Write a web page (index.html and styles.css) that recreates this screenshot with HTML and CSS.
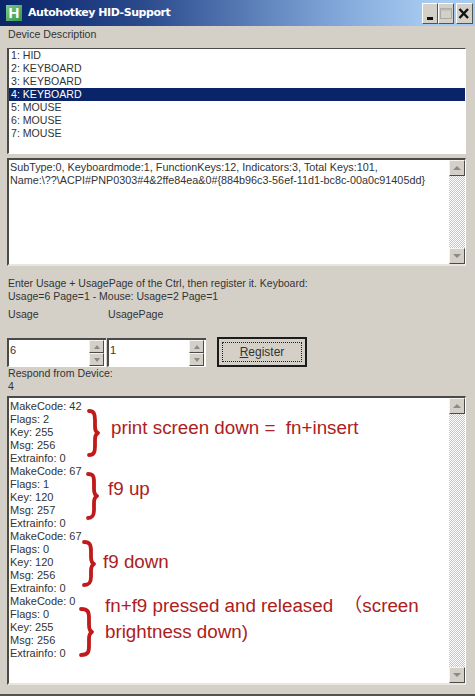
FILE: index.html
```html
<!DOCTYPE html>
<html lang="en">
<head>
<meta charset="utf-8">
<title>Autohotkey HID-Support</title>
<link rel="stylesheet" href="styles.css">
</head>
<body>
<div class="window">
  <header class="titlebar">
    <span class="app-icon">H</span>
    <span class="title">Autohotkey HID-Support</span>
    <div class="controls">
      <span class="ctl ctl-min"><svg width="16" height="20" viewBox="0 0 16 20"><rect x="5" y="14" width="6" height="3" fill="#111"/></svg></span>
      <span class="ctl ctl-max"><svg width="16" height="20" viewBox="0 0 16 20"><rect x="2.5" y="5.5" width="11" height="10" fill="none" stroke="#a8a8a4"/><rect x="2.5" y="5.5" width="11" height="2" fill="#b8b8b4"/></svg></span>
      <span class="ctl ctl-close"><svg width="16" height="20" viewBox="0 0 16 20"><path d="M3.500 6 12 15M12 6 3.500 15" stroke="#111" stroke-width="2.400" fill="none"/></svg></span>
    </div>
  </header>
  <main class="content">
    <div class="label first-label">Device Description</div>
    <ul class="listbox">
      <li>1: HID</li>
      <li>2: KEYBOARD</li>
      <li>3: KEYBOARD</li>
      <li class="selected">4: KEYBOARD</li>
      <li>5: MOUSE</li>
      <li>6: MOUSE</li>
      <li>7: MOUSE</li>
    </ul>
    <div class="textbox info">
      <div class="textbody">SubType:0, Keyboardmode:1, FunctionKeys:12, Indicators:3, Total Keys:101,<br>Name:\??\ACPI#PNP0303#4&amp;2ffe84ea&amp;0#{884b96c3-56ef-11d1-bc8c-00a0c91405dd}</div>
      <div class="scrollbar"><span class="sb-btn"><i class="arrow up"></i></span><span class="sb-track"></span><span class="sb-btn"><i class="arrow down"></i></span></div>
    </div>
    <p class="label hint">Enter Usage + UsagePage of the Ctrl, then register it. Keyboard:<br>Usage=6 Page=1 - Mouse: Usage=2 Page=1</p>
    <div class="field-labels"><span class="label usage-label">Usage</span><span class="label">UsagePage</span></div>
    <div class="inputs">
      <div class="spinner"><span class="spin-value">6</span><div class="spin-btns"><span class="spin-btn"><i class="arrow up"></i></span><span class="spin-btn"><i class="arrow down"></i></span></div></div>
      <div class="spinner"><span class="spin-value">1</span><div class="spin-btns"><span class="spin-btn"><i class="arrow up"></i></span><span class="spin-btn"><i class="arrow down"></i></span></div></div>
      <button class="register" type="button"><span class="focus"><u>R</u>egister</span></button>
    </div>
    <div class="label">Respond from Device:<br>4</div>
    <div class="textbox log">
      <div class="textbody">MakeCode: 42<br>Flags: 2<br>Key: 255<br>Msg: 256<br>Extrainfo: 0<br>MakeCode: 67<br>Flags: 1<br>Key: 120<br>Msg: 257<br>Extrainfo: 0<br>MakeCode: 67<br>Flags: 0<br>Key: 120<br>Msg: 256<br>Extrainfo: 0<br>MakeCode: 0<br>Flags: 0<br>Key: 255<br>Msg: 256<br>Extrainfo: 0</div>
      <div class="scrollbar"><span class="sb-btn"><i class="arrow up"></i></span><span class="sb-track"></span><span class="sb-btn"><i class="arrow down"></i></span></div>
      <svg class="braces" width="120" height="290" viewBox="0 0 120 290">
        <g fill="none" stroke="#c01a1a" stroke-width="3.800" stroke-linecap="round" stroke-linejoin="round">
          <path d="M81 15C86 15 87 18 87 24V31C87 34 88 36 90 37C88 38 87 40 87 43V50C87 56 86 59 81 59"/>
          <path d="M80 78C85 78 86 80 86 86V93C86 96 87 99 89 100C87 101 86 104 86 107V114C86 119 85 122 80 122"/>
          <path d="M76 146C82 146 83 149 83 155V161C83 165 84 167 86 168C84 169 83 171 83 175V181C83 187 81 189 76 189"/>
          <path d="M73 213C80 213 81 216 81 222V229C81 233 82 235 84 236C82 237 81 239 81 243V250C81 256 80 259 73 259"/>
        </g>
      </svg>
      <span class="note note-1">print screen down =&nbsp; fn+insert</span>
      <span class="note note-2">f9 up</span>
      <span class="note note-3">f9 down</span>
      <span class="note note-4">fn+f9 pressed and released &nbsp;（screen<br>brightness down)</span>
    </div>
  </main>
</div>
</body>
</html>
```
FILE: styles.css
```css
* { box-sizing: border-box; }
html, body { margin: 0; padding: 0; }
body { width: 475px; height: 696px; overflow: hidden; background: #d4d0c8; }
.window {
  width: 475px; height: 696px; overflow: hidden;
  background: #d4d0c8; border-bottom: 2px solid #55534e;
  font: 10.6px/13px "Liberation Sans", Arial, sans-serif; color: #333;
}
.titlebar {
  height: 26px; display: flex; align-items: center; padding: 0 2px 0 6px;
  background: linear-gradient(90deg, #0a246a 0%, #2a4a8c 30%, #7fa5d8 70%, #a6caf0 90%, #a6caf0 100%);
}
.app-icon {
  width: 16px; height: 16px; display: flex; align-items: center; justify-content: center;
  background: linear-gradient(135deg, #7fc98a, #2f9a4c); color: #fff;
  font: bold 15px/16px "Liberation Sans", sans-serif; margin-right: 6px;
}
.title { font: bold 11px/16px "DejaVu Sans", sans-serif; letter-spacing: -0.45px; color: #fff; }
.controls { margin-left: auto; display: flex; gap: 0; padding-top: 1px; }
.ctl {
  width: 16px; height: 21px; display: block; background: #d4d0c8;
  border: 1px solid; border-color: #fff #55534e #55534e #fff; overflow: hidden;
}
.ctl svg { display: block; margin: -1px 0 0 -1px; }
.ctl-close { margin-left: 2px; width: 17px; }
.content { padding: 2px 9px 0 7px; display: flex; flex-direction: column; }
.label { display: block; padding-left: 1px; margin: 0; }
.first-label { margin-bottom: 7px; }
.listbox {
  list-style: none; margin: 0; padding: 0; height: 106px; background: #fff;
  border: solid; border-width: 1px 1px 1px 2px; border-color: #4a4a48 #fff #fff #4a4a48;
}
.listbox li { height: 13px; line-height: 13px; padding-left: 2px; }
.listbox .selected { background: #0a246a; color: #fff; }
.textbox {
  position: relative; display: flex; background: #fff;
  border: solid; border-width: 2px 1px 2px 2px; border-color: #4a4a48 #fff #e8e6e0 #4a4a48;
}
.info { height: 108px; margin-top: 4px; font-size: 10.8px; }
.log { height: 289px; margin-top: 3px; font-size: 11px; }
.log .textbody { padding-top: 2px; }
.textbody { flex: 1; padding: 1px 0 0 1px; }
.scrollbar { width: 16px; display: flex; flex-direction: column; }
.sb-track {
  flex: 1;
  background: repeating-conic-gradient(#fff 0 25%, #c8c6c0 0 50%) 0 0 / 2px 2px;
}
.sb-btn, .spin-btn {
  display: flex; align-items: center; justify-content: center; background: #d4d0c8;
  border: 1px solid; border-color: #f4f3ef #4a4a48 #4a4a48 #f4f3ef;
}
.sb-btn { height: 16px; }
.arrow { display: block; width: 0; height: 0; border-left: 4px solid transparent; border-right: 4px solid transparent; }
.arrow.up { border-bottom: 4px solid #8a8a86; }
.arrow.down { border-top: 4px solid #8a8a86; }
.hint { margin-top: 11px; font-size: 10.5px; }
.field-labels { display: flex; margin-top: 5px; }
.usage-label { width: 100px; }
.inputs { display: flex; align-items: flex-start; margin-top: 16px; }
.spinner {
  width: 99px; height: 29px; display: flex; background: #fff; margin-top: 1px;
  border: solid; border-width: 2px 0 1px 2px; border-color: #4a4a48 #fff #fff #4a4a48;
}
.spinner + .spinner { margin-left: 1px; }
.spin-value { flex: 1; padding: 2px 0 0 1px; line-height: 16px; font-size: 11px; }
.spin-btns { width: 15px; display: flex; flex-direction: column; margin-right: 2px; }
.spin-btn { height: 13px; }
.spin-btn .arrow { border-left-width: 3px; border-right-width: 3px; }
.register {
  width: 90px; height: 30px; margin: 0 0 0 11px; padding: 3px; background: #d4d0c8;
  border: 2px solid #1c1c1c; font: inherit; color: inherit; display: block;
}
.focus {
  display: flex; width: 100%; height: 100%; align-items: center; justify-content: center;
  border: 1px dotted #222; font-size: 12px;
}
.braces { position: absolute; left: -1px; top: -2px; pointer-events: none; }
.note {
  position: absolute; font: 18.8px/26px "Liberation Sans", "Noto Sans CJK SC", sans-serif;
  color: #ad2020; white-space: nowrap;
}
.note-1 { left: 102px; top: 17px; }
.note-2 { left: 99px; top: 78px; }
.note-3 { left: 94px; top: 151px; }
.note-4 { left: 96px; top: 195px; }
```
